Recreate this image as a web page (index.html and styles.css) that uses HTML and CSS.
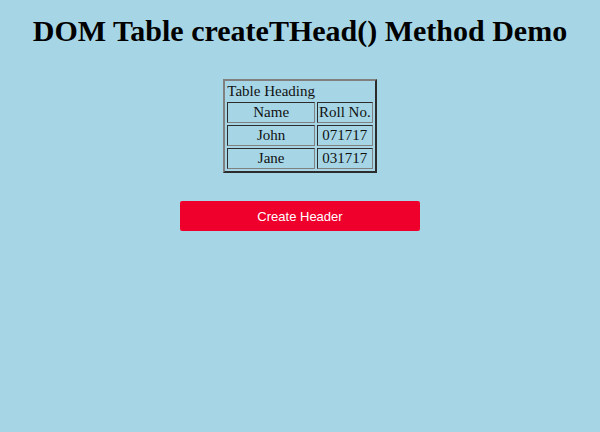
FILE: index.html
```html
<!DOCTYPE html>
<html>
<head>
<meta charset="utf-8">
<link rel="stylesheet" href="styles.css">
</head>
<body>
<h1 class="title">DOM Table createTHead() Method Demo</h1>
<div class="wrap">
<table class="tbl">
<thead><tr><td class="head">Table Heading</td><td class="head"></td></tr></thead>
<tbody>
<tr><td>Name</td><td>Roll No.</td></tr>
<tr><td>John</td><td>071717</td></tr>
<tr><td>Jane</td><td>031717</td></tr>
</tbody>
</table>
</div>
<div class="btnwrap"><button class="btn">Create Header</button></div>
</body>
</html>
```
FILE: styles.css
```css
body {
  margin: 0;
  background: #a6d6e6;
  font-family: "Liberation Serif", serif;
}
.title {
  margin: 14px 0 0;
  text-align: center;
  font-size: 30px;
  font-weight: bold;
}
.wrap {
  display: flex;
  justify-content: center;
  margin-top: 31px;
}
.tbl {
  border: 2px outset #808080;
  border-spacing: 2px;
  font-size: 15px;
  color: #111;
}
.tbl td {
  border: 1px inset #808080;
  text-align: center;
  padding: 1px;
}
.tbl td.head {
  border: none;
  padding: 0;
  text-align: left;
}
.btnwrap {
  display: flex;
  justify-content: center;
  margin-top: 28px;
}
.btn {
  width: 240px;
  height: 30px;
  background: #ef002c;
  color: #fff;
  border: none;
  border-radius: 2px;
  font-family: "Liberation Sans", sans-serif;
  font-size: 13px;
}
```
